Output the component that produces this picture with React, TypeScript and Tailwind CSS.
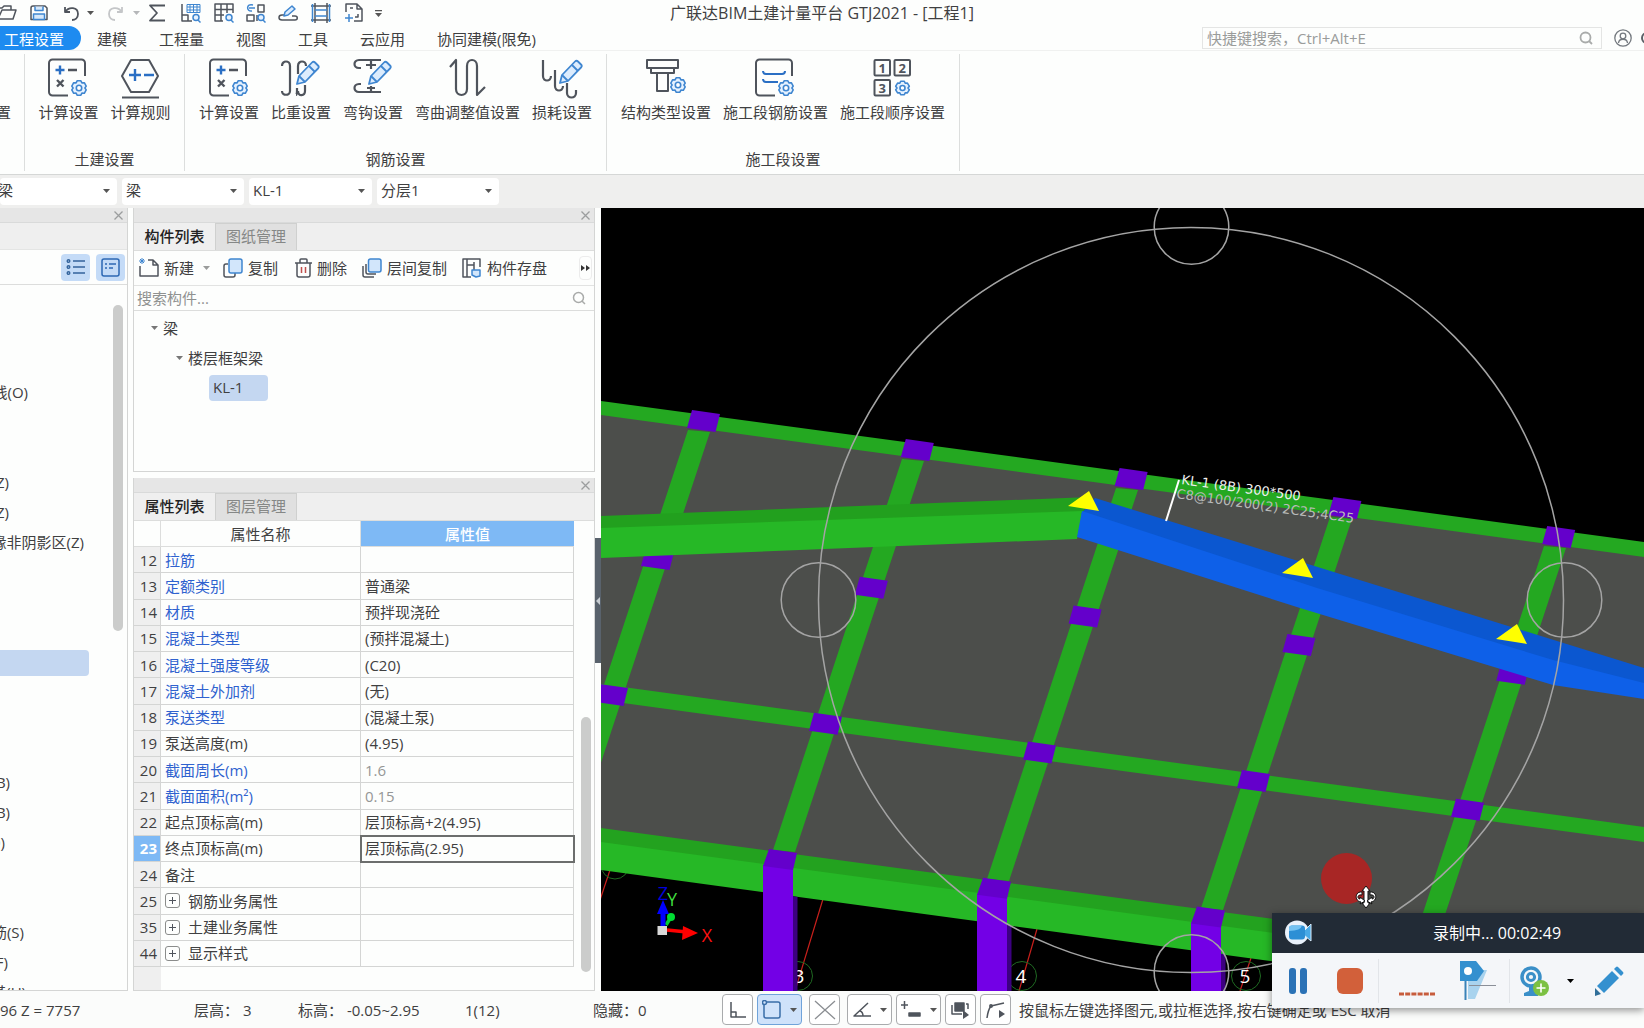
import React from "react";

type Kids = { children?: React.ReactNode };

const INK = "#4f545c";
const BLUE = "#3f86d0";

/* ---------- small drawing helpers ---------- */

function Ico({ w, h, box, sw = 1.5, stroke = INK, children }: Kids & { w: number; h: number; box?: string; sw?: number; stroke?: string }) {
  return (
    <svg width={w} height={h} viewBox={box ?? `0 0 ${w} ${h}`} fill="none" stroke={stroke} strokeWidth={sw} strokeLinejoin="round" className="shrink-0" aria-hidden="true">
      {children}
    </svg>
  );
}

function Caret({ color = "#555" }: { color?: string }) {
  return (
    <svg width="7" height="4" viewBox="0 0 7 4" className="shrink-0" aria-hidden="true">
      <path d="M0 0h7L3.500 4z" fill={color} />
    </svg>
  );
}

function Gear({ x, y, r = 7.5 }: { x: number; y: number; r?: number }) {
  const pts: string[] = [];
  for (let k = 0; k < 6; k++) {
    for (const [a, m] of [[-15, 1], [15, 1], [30, 0.78]]) {
      const t = ((k * 60 + a - 90) * Math.PI) / 180;
      pts.push(`${(x + Math.cos(t) * r * m).toFixed(1)},${(y + Math.sin(t) * r * m).toFixed(1)}`);
    }
  }
  return (
    <g stroke={BLUE} strokeWidth="1.600" fill="#e6f2ff">
      <polygon points={pts.join(" ")} />
      <circle cx={x} cy={y} r={r * 0.36} fill="#fff" />
    </g>
  );
}

function Pencil() {
  return (
    <g stroke={BLUE} strokeWidth="1.800" fill="#dcecfd">
      <path d="M16 26l2-8L31 4.500q1.500-1.500 3 0l3 3q1.500 1.500 0 3L24 24z" />
      <path d="M28 8l6 6M18 18l6 6" />
    </g>
  );
}

/* ---------- ribbon icons ---------- */

const CalcIcon = () => (
  <Ico w={40} h={40} sw={2}>
    <path d="M37 18V5a3.500 3.500 0 0 0-3.500-3.500h-29A3.500 3.500 0 0 0 1 5v29a3.500 3.500 0 0 0 3.500 3.500H20" />
    <path d="M7.500 12h9M12 7.500v9" stroke="#2a6fc4" strokeWidth="2.400" />
    <path d="M20 12h9M9 22l6.500 6.500M15.500 22L9 28.500" strokeWidth="2.400" />
    <Gear x={31} y={30} />
  </Ico>
);
const RuleIcon = () => (
  <Ico w={40} h={42} sw={2}>
    <path d="M1 18L10 2h18l9 16-9 16H10zM1 39.500h37" />
    <path d="M8 17h12M14 11v12M23 17h10" stroke="#2a6fc4" strokeWidth="2.400" />
  </Ico>
);
const WeightIcon = () => (
  <Ico w={40} h={40} sw={2.2}>
    <path d="M1 8c0-6 8-6 8 0v25c0 5-8 5-8 0M17 16V8c0-6 8-6 8 0M16 30v3c0 4-1 4-1 4M24 27v6c0 5-7 6-7 0" />
    <Pencil />
  </Ico>
);
const HookIcon = () => (
  <Ico w={40} h={40} sw={2.2}>
    <path d="M28 2H6c-6 0-6 8 0 8h2M28 34H6c-6 0-6-8 0-8h2M18 2v9M13 7h10M18 34v-6M14 30h8" />
    <Pencil />
  </Ico>
);
const BendIcon = () => (
  <Ico w={38} h={40} sw={2.2}>
    <path d="M1 9l6-7v29c0 8 11 8 11 0V8c0-8 10-8 10 0v29l8-8" />
  </Ico>
);
const LossIcon = () => (
  <Ico w={42} h={42} sw={2.2}>
    <path d="M2 2v16c0 6 8 6 8 0M14 12v16c0 6 8 6 8 0M26 25v10c0 6 9 6 9 0v-3" />
    <g transform="translate(3 -1)"><Pencil /></g>
  </Ico>
);
const StructIcon = () => (
  <Ico w={42} h={40} sw={2}>
    <path d="M2 2h31v8H2zM6 10h23v5H6zM12 15h11v18H12z" />
    <Gear x={33} y={27} />
  </Ico>
);
const SegBarIcon = () => (
  <Ico w={42} h={40} sw={2}>
    <path d="M38 18V5a3.500 3.500 0 0 0-3.500-3.500h-29A3.500 3.500 0 0 0 2 5v29a3.500 3.500 0 0 0 3.500 3.500H21" />
    <path d="M9 13c0 2 1 3 3 3h16c2 0 3-1 3-3M9 21c0 2 1 3 3 3h12" stroke="#2a6fc4" />
    <Gear x={32} y={30} />
  </Ico>
);
const SegOrderIcon = () => (
  <Ico w={40} h={40} sw={2}>
    <rect x="1.500" y="2" width="15.500" height="15.500" rx="1" />
    <rect x="21.500" y="2" width="15.500" height="15.500" rx="1" />
    <rect x="1.500" y="22" width="15.500" height="15.500" rx="1" />
    <g fill={INK} stroke="none" fontSize="13" fontWeight="700" textAnchor="middle" fontFamily="Open Sans, sans-serif">
      <text x="9.250" y="14.500">1</text>
      <text x="29.250" y="14.500">2</text>
      <text x="9.250" y="34.500">3</text>
    </g>
    <Gear x={29.5} y={30} r={7} />
  </Ico>
);

function Tool({ icon, label }: { icon: React.ReactNode; label: string }) {
  return (
    <button className="flex flex-col items-center">
      <span className="flex h-10 items-start justify-center">{icon}</span>
      <span className="mt-[3px] whitespace-nowrap leading-[22px]">{label}</span>
    </button>
  );
}

function Group({ title, width, children }: Kids & { title: string; width: string }) {
  return (
    <section className={`my-[3px] flex flex-col items-center justify-between border-r border-[#dcdedd] pt-1 ${width}`}>
      <div className="flex gap-3">{children}</div>
      <h2 className="leading-[24px]">{title}</h2>
    </section>
  );
}

/* ---------- title bar ---------- */

function QuickBtn({ label, w, children }: Kids & { label: string; w: string }) {
  return (
    <button aria-label={label} className={`flex h-6 shrink-0 items-center justify-center ${w}`}>
      {children}
    </button>
  );
}

function TitleBar() {
  return (
    <header className="flex h-[26px] items-center">
      <div className="flex flex-1 items-center">
        <QuickBtn label="打开" w="w-[17px]">
          <Ico w={17} h={16}><path d="M-4 14V3h6l2-2h7v4M-2 14l4-9h14l-3 9z" /></Ico>
        </QuickBtn>
        <QuickBtn label="保存" w="w-[44px]">
          <Ico w={18} h={16}><path d="M1 14.500V3a2 2 0 0 1 2-2h12l2 2v11.500z" /><path d="M5 1.500v4h8v-4M3.500 9h11v5.500h-11z" stroke={BLUE} fill="#d6e8fb" /></Ico>
        </QuickBtn>
        <QuickBtn label="撤销" w="w-[22px]">
          <Ico w={16} h={16}><path d="M1 2v5h5M1 7c4-6 13-5 13 2 0 4-3 6-6 6" strokeWidth="1.800" /></Ico>
        </QuickBtn>
        <QuickBtn label="撤销列表" w="w-[14px]"><Caret /></QuickBtn>
        <QuickBtn label="重做" w="w-[36px]">
          <Ico w={16} h={16} stroke="#c4c6c8"><path d="M15 2v5h-5M15 7C11 1 2 2 2 9c0 4 3 6 6 6" strokeWidth="1.800" /></Ico>
        </QuickBtn>
        <QuickBtn label="重做列表" w="w-[7px]"><Caret color="#b5b7b9" /></QuickBtn>
        <QuickBtn label="汇总" w="w-[34px]">
          <Ico w={18} h={18}><path d="M17 1.500H2L9 9l-7 7.500h15" strokeWidth="1.800" /></Ico>
        </QuickBtn>
        <QuickBtn label="查看工程量" w="w-[33px]">
          <Ico w={20} h={20}><path d="M1 1v17h10M1 12h6v6" /><path d="M6 1.500h13v8H6zM6 4h13M6 7h13M9 1.500v8M12.500 1.500v8M16 1.500v8" stroke={BLUE} strokeWidth="1" /><circle cx="15" cy="14.500" r="3" stroke={BLUE} fill="#e6f2ff" /><path d="M17 17l2.500 2.500" stroke={BLUE} /></Ico>
        </QuickBtn>
        <QuickBtn label="查看报表" w="w-[33px]">
          <Ico w={20} h={20}><path d="M9 18H1V1h18v9M1 6.500h18M1 12h9M7 1v17M13 1v9" /><circle cx="15" cy="14.500" r="3" stroke={BLUE} fill="#e6f2ff" /><path d="M17 17l2.500 2.500" stroke={BLUE} /></Ico>
        </QuickBtn>
        <QuickBtn label="查找图元" w="w-[32px]">
          <Ico w={20} h={20}><path d="M12 2h6v7h-6zM1 12h7v6H1zM11 12v6" /><path d="M7 2C0 0 0 9 6 8M3 5h6" stroke={BLUE} /><circle cx="15" cy="14.500" r="3" stroke={BLUE} fill="#e6f2ff" /><path d="M17 17l2.500 2.500" stroke={BLUE} /></Ico>
        </QuickBtn>
        <QuickBtn label="编辑" w="w-[32px]">
          <Ico w={20} h={18}><path d="M6 11H4c-4 0-4 5 0 5h13c3 0 3-4 0-4h-3" /><path d="M6 12l1-4 7-6 3 3-7 6z" stroke={BLUE} fill="#dcecfd" /></Ico>
        </QuickBtn>
        <QuickBtn label="楼层" w="w-[33px]">
          <Ico w={20} h={20}><path d="M4 0v20M16 0v20M0 3h20M0 17h20" /><path d="M1.500 1v18M18.500 1v18M4 7h12M4 13h12" stroke={BLUE} /></Ico>
        </QuickBtn>
        <QuickBtn label="全屏" w="w-[33px]">
          <Ico w={20} h={20}><path d="M2 9V1h11l5 5v12h-8M13 1v5h5M6 5h3M14 11v3h-3" /><path d="M5 11v8M1 15h8" stroke={BLUE} /></Ico>
        </QuickBtn>
        <QuickBtn label="自定义" w="w-[17px]">
          <Ico w={7} h={7} sw={0}><path d="M0 0h7v1.200H0zM0 3h7L3.500 7z" fill="#555" /></Ico>
        </QuickBtn>
      </div>
      <h1 className="text-base leading-[26px]">广联达BIM土建计量平台 GTJ2021 - [工程1]</h1>
      <div className="flex-1" />
    </header>
  );
}

function MenuBar() {
  return (
    <nav className="flex h-[25px] items-center border-b border-[#f0f1f0]">
      <button className="h-6 w-[81px] rounded-r-full bg-[#1e8bf0] pt-px pl-1 text-left text-white">工程设置</button>
      <div className="ml-4 flex flex-1 gap-8 pt-0.5">
        {["建模", "工程量", "视图", "工具", "云应用", "协同建模(限免)"].map((t) => (
          <button key={t} className="whitespace-nowrap">{t}</button>
        ))}
      </div>
      <label className="flex h-[22px] w-[400px] items-center border border-[#e4e5e4] pr-2 pl-1">
        <input aria-label="快捷键搜索" placeholder="快捷键搜索，Ctrl+Alt+E" className="min-w-0 flex-1 bg-transparent outline-none placeholder:text-[#9a9c9b]" />
        <Ico w={14} h={14} stroke="#a9abaa" sw={1.8}><circle cx="6.500" cy="6.500" r="5" /><path d="M10 10l3 3" /></Ico>
      </label>
      <div className="ml-3 flex w-[30px] items-center gap-[9px] overflow-hidden">
        <button aria-label="用户">
          <Ico w={18} h={18} stroke="#74797f" sw={1.3}><circle cx="9" cy="9" r="8.200" /><circle cx="9" cy="7" r="2.800" /><path d="M4.500 14c.5-5 8.500-5 9 0" /></Ico>
        </button>
        <Ico w={12} h={12} stroke="#5b5f66" sw={2}><circle cx="6" cy="6" r="5" /></Ico>
      </div>
    </nav>
  );
}

function Ribbon() {
  return (
    <div className="flex h-[123px] items-stretch">
      <div className="my-[3px] flex w-[25px] items-start border-r border-[#dcdedd] pt-[47px]">
        <div className="flex w-[11px] justify-end overflow-hidden leading-[22px]"><span>置</span></div>
      </div>
      <Group title="土建设置" width="w-[160px]">
        <Tool icon={<CalcIcon />} label="计算设置" />
        <Tool icon={<RuleIcon />} label="计算规则" />
      </Group>
      <Group title="钢筋设置" width="w-[422px]">
        <Tool icon={<CalcIcon />} label="计算设置" />
        <Tool icon={<WeightIcon />} label="比重设置" />
        <Tool icon={<HookIcon />} label="弯钩设置" />
        <Tool icon={<BendIcon />} label="弯曲调整值设置" />
        <Tool icon={<LossIcon />} label="损耗设置" />
      </Group>
      <Group title="施工段设置" width="w-[353px]">
        <Tool icon={<StructIcon />} label="结构类型设置" />
        <Tool icon={<SegBarIcon />} label="施工段钢筋设置" />
        <Tool icon={<SegOrderIcon />} label="施工段顺序设置" />
      </Group>
    </div>
  );
}

function Combo({ value, label, width, pad }: { value: string; label: string; width: string; pad: string }) {
  return (
    <label className={`relative flex h-[27px] items-center overflow-hidden rounded bg-white ${width}`}>
      <select aria-label={label} className={`h-full w-full appearance-none pb-[3px] outline-none ${pad}`}>
        <option>{value}</option>
      </select>
      <span className="pointer-events-none absolute right-[7px] bottom-3"><Caret /></span>
    </label>
  );
}

/* ---------- panels ---------- */

function PanelHead() {
  return (
    <div className="flex h-[15px] shrink-0 items-center justify-end border-b border-[#d9dada] bg-[#e6e6e6] pr-1">
      <button aria-label="关闭">
        <Ico w={9} h={9} stroke="#9b9d9e" sw={1.3}><path d="M.5.5l8 8M8.500.5l-8 8" /></Ico>
      </button>
    </div>
  );
}

function Tabs({ on, off }: { on: string; off: string }) {
  return (
    <div role="tablist" className="flex h-[28px] shrink-0 border-b border-[#dcdddc] bg-[#efefef]">
      <button role="tab" aria-selected="true" className="w-[81px] pb-px font-medium text-[#222]">{on}</button>
      <button role="tab" aria-selected="false" className="w-[82px] border border-b-0 border-[#cfd0cf] bg-[#e0e0e0] pb-0.5 text-[#858786]">{off}</button>
    </div>
  );
}

const LEFT_ROWS: { t: string; w: string; on?: boolean }[] = [
  { t: "", w: "w-0" }, { t: "", w: "w-0" }, { t: "", w: "w-0" },
  { t: "线(O)", w: "w-[28px]" },
  { t: "", w: "w-0" }, { t: "", w: "w-0" },
  { t: "(Z)", w: "w-[9px]" },
  { t: "(Z)", w: "w-[9px]" },
  { t: "缘非阴影区(Z)", w: "w-[84px]" },
  { t: "", w: "w-0" }, { t: "", w: "w-0" }, { t: "", w: "w-0" },
  { t: "", w: "w-[89px]", on: true },
  { t: "", w: "w-0" }, { t: "", w: "w-0" }, { t: "", w: "w-0" },
  { t: "(B)", w: "w-[10px]" },
  { t: "(B)", w: "w-[10px]" },
  { t: "(Q)", w: "w-[5px]" },
  { t: "", w: "w-0" }, { t: "", w: "w-0" },
  { t: "筋(S)", w: "w-[24px]" },
  { t: "(F)", w: "w-[8px]" },
  { t: "基(U)", w: "w-[26px]" },
];

function LeftPanel() {
  return (
    <aside className="flex min-h-0 w-[128px] shrink-0 flex-col border-r border-b border-[#d4d5d4]">
      <PanelHead />
      <div className="h-[27px] shrink-0 border-b border-[#e4e5e4] bg-[#efefef]" />
      <div className="flex h-[35px] shrink-0 items-center justify-end gap-[6px] border-b border-[#dcdddc] pr-[2px]">
        <button aria-label="列表" className="flex h-[27px] w-[29px] items-center justify-center rounded bg-[#c4dbf7]">
          <Ico w={20} h={18} stroke="#33639c" sw={1.4}><path d="M7 3h12M7 9h12M7 15h12" /><circle cx="2.500" cy="3" r="1.300" /><circle cx="2.500" cy="9" r="1.300" /><circle cx="2.500" cy="15" r="1.300" /></Ico>
        </button>
        <button aria-label="详情" className="flex h-[27px] w-[29px] items-center justify-center rounded bg-[#c4dbf7]">
          <Ico w={19} h={19} stroke="#2c68b4"><rect x="1" y="1" width="17" height="17" rx="2" /><path d="M4 6h2M8 6h7M4 10h2M8 10h4" /></Ico>
        </button>
      </div>
      <div className="flex min-h-0 flex-1">
        <ul className="min-w-0 flex-1 overflow-hidden pt-[3px]">
          {LEFT_ROWS.map((r, i) => (
            <li key={i} className="flex h-[30px] items-center">
              <span className={`flex h-[26px] items-center justify-end overflow-hidden pb-0.5 whitespace-nowrap ${r.w} ${r.on ? "rounded-r bg-[#c4d7f1]" : ""}`}>{r.t}</span>
            </li>
          ))}
        </ul>
        <div className="mt-5 mr-1 h-[326px] w-[10px] rounded-full bg-[#cbcccb]" />
      </div>
    </aside>
  );
}

function CompTool({ label, gap, children }: Kids & { label: string; gap: string }) {
  return (
    <button className={`flex items-center gap-[5px] whitespace-nowrap ${gap}`}>
      {children}
      {label}
    </button>
  );
}

function ComponentPanel() {
  return (
    <section className="flex h-[264px] shrink-0 flex-col border border-t-0 border-[#d4d5d4]">
      <PanelHead />
      <Tabs on="构件列表" off="图纸管理" />
      <div className="flex h-[35px] shrink-0 items-center border-b border-[#e2e3e2] pl-[5px]">
        <CompTool label="新建" gap="mr-[9px]">
          <Ico w={20} h={20}><path d="M9 2h5l5 5v11H1V8M14 2v5h5" /><path d="M3 0v6M0 3h6M1 1l4 4M5 1L1 5" stroke={BLUE} strokeWidth="1" /></Ico>
        </CompTool>
        <Caret color="#9a9c9b" />
        <CompTool label="复制" gap="ml-[13px]">
          <Ico w={20} h={20}><path d="M5 6H3a2 2 0 0 0-2 2v9a2 2 0 0 0 2 2h7a2 2 0 0 0 2-2v-2" /><rect x="6" y="1" width="13" height="14" rx="2" stroke={BLUE} fill="#d2e6fb" /></Ico>
        </CompTool>
        <CompTool label="删除" gap="ml-[17px]">
          <Ico w={17} h={20}><path d="M0 5h17M2 5v12a2 2 0 0 0 2 2h9a2 2 0 0 0 2-2V5M5 5V2a1 1 0 0 1 1-1h5a1 1 0 0 1 1 1v3" /><path d="M6.500 9v6M10.500 9v6" stroke="#c0504d" /></Ico>
        </CompTool>
        <CompTool label="层间复制" gap="ml-[15px]">
          <Ico w={20} h={20}><path d="M1 8v9a2 2 0 0 0 2 2h9M4 6v8a2 2 0 0 0 2 2h8" /><rect x="6.500" y="1" width="12.500" height="13" rx="2" stroke={BLUE} fill="#d2e6fb" /></Ico>
        </CompTool>
        <CompTool label="构件存盘" gap="ml-[15px]">
          <Ico w={20} h={20}><path d="M9 19H1V1h17v8M5 1v18M5 7h7M12 4v8" /><path d="M10 12h8v6l-4 1-4-2z" stroke={BLUE} fill="#d2e6fb" /></Ico>
        </CompTool>
        <button aria-label="更多" className="mr-0.5 ml-auto flex h-6 w-[13px] items-center justify-center rounded-sm border border-[#ececec]">
          <Ico w={9} h={6} sw={0}><path d="M0 0l4 3-4 3zM5 0l4 3-4 3z" fill="#333" /></Ico>
        </button>
      </div>
      <label className="flex h-[25px] shrink-0 items-center border-b border-[#dcdddc] pr-2 pl-[3px]">
        <input aria-label="搜索构件" placeholder="搜索构件..." className="min-w-0 flex-1 bg-transparent pb-px outline-none placeholder:text-[#8f9190]" />
        <Ico w={14} h={14} stroke="#a9abaa" sw={1.5}><circle cx="6.500" cy="6.500" r="5" /><path d="M10 10l3 3" /></Ico>
      </label>
      <ul className="flex-1 pt-0.5">
        <li className="flex h-[30px] items-center gap-[5px] pl-[17px]"><Caret color="#777" />梁</li>
        <li className="flex h-[30px] items-center gap-[5px] pl-[42px]"><Caret color="#777" />楼层框架梁</li>
        <li className="flex h-[30px] items-center pl-[75px]"><span className="h-[26px] w-[59px] rounded bg-[#c4d7f1] pl-1 leading-[25px]">KL-1</span></li>
      </ul>
    </section>
  );
}

type Row = { n: number; name: string; value: string; tone?: "blue" | "black"; dim?: boolean; on?: boolean; group?: boolean };
const ROWS: Row[] = [
  { n: 12, name: "拉筋", value: "", tone: "blue" },
  { n: 13, name: "定额类别", value: "普通梁", tone: "blue" },
  { n: 14, name: "材质", value: "预拌现浇砼", tone: "blue" },
  { n: 15, name: "混凝土类型", value: "(预拌混凝土)", tone: "blue" },
  { n: 16, name: "混凝土强度等级", value: "(C20)", tone: "blue" },
  { n: 17, name: "混凝土外加剂", value: "(无)", tone: "blue" },
  { n: 18, name: "泵送类型", value: "(混凝土泵)", tone: "blue" },
  { n: 19, name: "泵送高度(m)", value: "(4.95)" },
  { n: 20, name: "截面周长(m)", value: "1.6", tone: "blue", dim: true },
  { n: 21, name: "截面面积(m²)", value: "0.15", tone: "blue", dim: true },
  { n: 22, name: "起点顶标高(m)", value: "层顶标高+2(4.95)" },
  { n: 23, name: "终点顶标高(m)", value: "层顶标高(2.95)", on: true },
  { n: 24, name: "备注", value: "" },
  { n: 25, name: "钢筋业务属性", value: "", group: true },
  { n: 35, name: "土建业务属性", value: "", group: true },
  { n: 44, name: "显示样式", value: "", group: true },
];

function PropertyPanel() {
  return (
    <section className="mt-[6px] flex min-h-0 flex-1 flex-col border border-t-0 border-[#d4d5d4]">
      <PanelHead />
      <Tabs on="属性列表" off="图层管理" />
      <div className="flex min-h-0 flex-1">
        <div className="flex w-[440px] flex-col">
          <table className="h-[446px] w-full table-fixed border-separate border-spacing-0">
            <thead>
              <tr className="h-[26px]">
                <th className="w-[27px] border-r border-b border-[#dcdddc] p-0" />
                <th className="w-[200px] border-r border-b border-[#dcdddc] p-0 font-normal">属性名称</th>
                <th className="border-b border-[#dcdddc] bg-[#7eb9f5] p-0 font-medium text-white">属性值</th>
              </tr>
            </thead>
            <tbody>
              {ROWS.map((r) => (
                <tr key={r.n} className="h-[26px]">
                  <td className={`border-r border-b border-[#d4d5d4] p-0 pr-[3px] text-right ${r.on ? "bg-[#7eb9f5] font-bold text-white" : "bg-[#efefef]"}`}>{r.n}</td>
                  <td className={`border-r border-b border-[#d4d5d4] p-0 pl-1 ${r.tone === "blue" ? "text-[#2f62cf]" : ""}`}>
                    <span className="flex items-center">
                      {r.group && (
                        <button aria-label="展开" className="mr-2 flex h-[15px] w-[15px] items-center justify-center rounded-[3px] border border-[#8a8c8b]">
                          <Ico w={7} h={7} sw={1}><path d="M0 3.500h7M3.500 0v7" /></Ico>
                        </button>
                      )}
                      {r.name}
                    </span>
                  </td>
                  <td className={`border-r border-b border-[#d4d5d4] p-0 pl-1 ${r.on ? "outline-2 -outline-offset-1 outline-[#6c6e6d]" : ""} ${r.dim ? "text-[#959796]" : ""}`}>{r.value}</td>
                </tr>
              ))}
            </tbody>
          </table>
          <div className="w-[27px] flex-1 bg-[#efefef]" />
        </div>
        <div className="mb-[18px] ml-[7px] h-[255px] w-[10px] self-end rounded-full bg-[#cbcccb]" />
      </div>
    </section>
  );
}

/* ---------- 3D model view ---------- */

const STEP = [0, 1, 2, 3, 4, 5];
const quad = (x: number, y: number) => `${x},${y} ${x + 28},${y + 4} ${x + 23.5},${y + 22} ${x - 5},${y + 18}`;

function ModelView() {
  return (
    <svg viewBox="601 208 1043 783" preserveAspectRatio="xMinYMin slice" className="h-full w-full bg-black" role="img" aria-label="三维模型">
      <polygon points="601,408 1644,549 1644,975 601,835" fill="#4c4e4b" />
      <polygon points="601,401 1644,542 1644,557 601,415" fill="#24a821" />
      <polygon points="601,684 1644,827 1644,842 601,700" fill="#24a821" />
      {STEP.map((k) => {
        const dx = (k - 1) * 214;
        const dy = (k - 1) * 29;
        return <polygon key={k} points={`${902 + dx},${459 + dy} ${924 + dx},${461 + dy} ${795 + dx},${852 + dy} ${773 + dx},${850 + dy}`} fill="#24a821" />;
      })}
      <g fill="#6400cb">
        {STEP.map((k) => (
          <g key={k}>
            <polygon points={quad(692 + k * 213.8, 410 + k * 29)} />
            <polygon points={quad(646 + k * 213.8, 548 + k * 28.7)} />
            <polygon points={quad(600 + k * 214, 684 + k * 28.7)} />
          </g>
        ))}
      </g>

      {/* sloped beam and the selected beam */}
      <polygon points="601,516 1090,497 1082,515 601,532" fill="#22a01e" />
      <polygon points="601,528 1083,511 1077,539 601,558" fill="#26b826" />
      <polygon points="1095,498 1644,668 1644,686 1553,666 1317,592 1081,514" fill="#0b57d0" />
      <polygon points="1082,511 1317,588 1553,660 1644,683 1644,699 1553,685 1300,608 1077,537" fill="#0e60e8" />
      <path d="M1089 491l10 20-31-5zM1303 558l10 20-31-5zM1517 624l10 20-31-5z" fill="#ffff00" />

      {/* axis grid below the model */}
      <path d="M823 899l-28 92M1037 929l-18 62M1251 958l-11 33M610 870l-10 30" stroke="#c8201c" strokeWidth="1.200" />
      <g stroke="#1f6a22" fill="none">
        <circle cx="798" cy="976" r="14.500" />
        <circle cx="1022" cy="976" r="14.500" />
        <circle cx="1246" cy="976" r="14.500" />
        <circle cx="615" cy="865" r="14" />
      </g>
      <g fill="#fff" fontSize="19" textAnchor="middle" fontFamily="Open Sans, sans-serif">
        <text x="799" y="983">3</text>
        <text x="1021" y="983">4</text>
        <text x="1245" y="983">5</text>
      </g>

      <polygon points="601,828 1644,969 1644,986 601,845" fill="#23a21f" />
      <polygon points="601,842 1644,983 1644,1012 601,870" fill="#26b826" />
      {[0, 1, 2].map((k) => {
        const x = 763 + k * 214;
        const y = 849 + k * 28.7;
        return (
          <g key={k}>
            <polygon points={`${x + 29},${y + 47} ${x + 34.5},${y + 48} ${x + 34.5},991 ${x + 29},991`} fill="#3c0080" />
            <polygon points={`${x},${y + 16} ${x + 30},${y + 18} ${x + 30},991 ${x},991`} fill="#7300e6" />
            <polygon points={`${x + 6},${y} ${x + 34},${y + 4} ${x + 30},${y + 21} ${x},${y + 17}`} fill="#6400cb" />
          </g>
        );
      })}

      <g stroke="#a4a4a4" strokeWidth="1.500" fill="none">
        <circle cx="1191" cy="600" r="372.500" />
        <circle cx="818.500" cy="600" r="37.300" />
        <circle cx="1564.500" cy="600" r="37.300" />
        <circle cx="1191.500" cy="227" r="37.300" />
        <circle cx="1191.500" cy="972" r="37.300" />
      </g>

      <path d="M1179 480l-13 41" stroke="#fff" strokeWidth="2" />
      <g fontSize="13" fontFamily="DejaVu Sans, sans-serif">
        <text transform="translate(1181 484) rotate(8)" fill="#f0f0f0">KL-1 (8B) 300*500</text>
        <text transform="translate(1176 498) rotate(8)" fill="#b9bbb9">C8@100/200(2) 2C25;4C25</text>
      </g>

      {/* view axes */}
      <g strokeWidth="3.500">
        <path d="M667 930l20 2" stroke="#f00" />
        <path d="M683 926l15 7-16 7z" fill="#f00" />
        <path d="M666 925l5-8" stroke="#0c3" />
        <circle cx="671" cy="917" r="4" fill="#0d3" />
        <path d="M663 926v-15" stroke="#00f" strokeWidth="5" />
        <path d="M657 914l6-14 6 14z" fill="#00f" />
        <path d="M657.500 926h9.500v9h-9.500z" fill="#d8d8d8" />
      </g>
      <g fontSize="18" textAnchor="middle" fontFamily="Open Sans, sans-serif">
        <text x="663" y="900" fill="#00d">Z</text>
        <text x="672" y="906" fill="#3fdc3f">Y</text>
        <text x="707" y="942" fill="#f11">X</text>
      </g>

      <circle cx="1346.500" cy="878.500" r="25.500" fill="#a82625" />
      <g stroke="#111" strokeWidth="1" fill="#fff">
        <path d="M1366 886l4 5h-2v12h2l-4 5-4-5h2v-12h-2z" />
        <path d="M1362 892c-7-1-8 9-1 10l-1 2 5-3-5-4v2c-3 0-3-5 2-4zM1370 892c7-1 8 9 1 10l1 2-5-3 5-4v2c3 0 3-5-2-4z" />
      </g>
    </svg>
  );
}

/* ---------- status bar ---------- */

function StatusBtn({ label, w, on, menu, children }: Kids & { label: string; w: string; on?: boolean; menu?: boolean }) {
  return (
    <button aria-label={label} className={`flex h-[31px] items-center justify-center gap-2 rounded border ${w} ${on ? "border-[#6fa3da] bg-[#cfe2fa]" : "border-[#a9abad] bg-white"}`}>
      {children}
      {menu && <Caret />}
    </button>
  );
}

function StatusBar() {
  return (
    <footer className="flex h-[37px] shrink-0 items-center overflow-hidden whitespace-nowrap bg-[#fbfcfb]">
      <span className="w-[194px]">96 Z = 7757</span>
      <span className="w-[104px]">层高：&nbsp;3</span>
      <span className="w-[167px]">标高：&nbsp;-0.05~2.95</span>
      <span className="w-[128px]">1(12)</span>
      <span className="w-[129px]">隐藏：0</span>
      <div className="flex items-center gap-1">
        <StatusBtn label="正交" w="w-[31px]"><Ico w={18} h={18}><path d="M2 1v15h15M2 11h5v5" /></Ico></StatusBtn>
        <StatusBtn label="选择" w="w-[45px]" on menu><Ico w={20} h={20} stroke="#3a6ea8"><path d="M5 2h11a2 2 0 0 1 2 2v12a2 2 0 0 1-2 2H4a2 2 0 0 1-2-2V5" /><circle cx="2.500" cy="2.500" r="2" /></Ico></StatusBtn>
        <StatusBtn label="交点" w="mx-[3px] w-[31px]"><Ico w={22} h={20} stroke="#8b8e92" sw={1.3}><path d="M1 1l20 18M21 1L1 19" /></Ico></StatusBtn>
        <StatusBtn label="角度" w="w-[45px]" menu><Ico w={20} h={18}><path d="M16 2L2 15h17M8 10q3 1 3 5" /></Ico></StatusBtn>
        <StatusBtn label="偏移" w="w-[45px]" menu><Ico w={22} h={18}><path d="M1 4h7M4.500 0v8" /><path d="M9 12h11v3H9z" fill={INK} /></Ico></StatusBtn>
        <StatusBtn label="显示" w="w-[31px]"><Ico w={20} h={18}><path d="M4 2h9v8H4z" fill={INK} /><path d="M1 4v9h10M15 3h2v5" /><path d="M12 9l6 5-6 4z" fill={INK} strokeWidth="0" /></Ico></StatusBtn>
        <StatusBtn label="折线" w="w-[31px]"><Ico w={20} h={18}><path d="M1 17q1-8 4-12l13-3" /><circle cx="5" cy="5" r="1.200" /><path d="M13 9l6 4-6 4z" fill={INK} strokeWidth="0" /></Ico></StatusBtn>
      </div>
      <span className="ml-2">按鼠标左键选择图元,或拉框选择,按右键确定或 ESC 取消</span>
    </footer>
  );
}

/* ---------- screen recorder window ---------- */

function Recorder() {
  return (
    <div className="absolute right-0 bottom-5 w-[372px] shadow-[0_2px_8px_rgba(0,0,0,0.45)]">
      <div className="flex h-10 items-center bg-[#222b36] pl-3 text-white">
        <svg width="30" height="28" viewBox="0 0 30 28" aria-hidden="true">
          <circle cx="13" cy="13.500" r="12" fill="#e9f1fb" />
          <path d="M20 12l7-7v17l-7-6z" fill="#49a9e6" stroke="#d9ecfb" />
          <rect x="5" y="6.500" width="16" height="14" rx="3" fill="#2d8fd5" />
          <path d="M5 12V9.500a3 3 0 0 1 3-3h10q-1 5-13 5.500z" fill="#74c2f2" />
        </svg>
        <span className="ml-[119px] text-base">录制中... 00:02:49</span>
      </div>
      <div className="flex h-[55px] items-center bg-[#f4f6f9]">
        <button aria-label="暂停" className="ml-4 flex w-[20px] justify-center gap-1">
          <span className="h-[26px] w-[7px] rounded-[3px] bg-[#2b72b6]" />
          <span className="h-[26px] w-[7px] rounded-[3px] bg-[#2b72b6]" />
        </button>
        <button aria-label="停止" className="ml-[29px] h-[26px] w-[26px] rounded-md bg-[#d2603a]" />
        <div className="ml-[15px] h-11 border-l border-[#e2e5e9]" />
        <svg width="36" height="40" viewBox="0 0 36 40" className="ml-5" aria-hidden="true">
          <path d="M0 33h36" stroke="#c75c3d" strokeWidth="3" strokeDasharray="5 1.200" />
        </svg>
        <svg width="38" height="40" viewBox="0 0 38 40" className="ml-6" aria-hidden="true">
          <path d="M22 9h6L16 38H9V20h8z" fill="#a9d3ee" />
          <path d="M1 0h16l8 10-7 10H1z" fill="#3490cf" />
          <circle cx="9" cy="10" r="4" fill="#fff" />
          <path d="M6.500 20v19" stroke="#3a83b8" strokeWidth="2" />
          <path d="M10 24.500h27" stroke="#8a8f98" />
        </svg>
        <div className="ml-3 h-11 border-l border-[#e2e5e9]" />
        <button aria-label="摄像头" className="ml-[9px]">
          <svg width="32" height="32" viewBox="0 0 32 32" aria-hidden="true">
            <circle cx="12" cy="12" r="9" fill="none" stroke="#3a8fc8" strokeWidth="3.500" />
            <circle cx="12" cy="12" r="3.600" fill="none" stroke="#3a8fc8" strokeWidth="3" />
            <path d="M10 22h5v5h4v4H5v-3l5-2z" fill="#3a8fc8" />
            <circle cx="22" cy="23" r="8" fill="#7cc142" />
            <path d="M17.500 23h9M22 18.500v9" stroke="#fff" strokeWidth="1.600" />
          </svg>
        </button>
        <span className="ml-4"><Caret color="#000" /></span>
        <button aria-label="画笔" className="ml-5">
          <svg width="30" height="30" viewBox="0 0 30 30" fill="#3490cf" aria-hidden="true">
            <path d="M18 5l7 7L10 27l-7-7z" />
            <path d="M20 3l2-2q1-1 2 0l5 5q1 1 0 2l-2 2z" />
            <path d="M1 22l6 6-6 2z" fill="#2f6e99" />
          </svg>
        </button>
      </div>
    </div>
  );
}

export default function App() {
  return (
    <div className="relative flex h-screen w-full flex-col overflow-hidden bg-[#fdfefd] font-['Open_Sans','Noto_Sans_CJK_SC',sans-serif] text-[15px] leading-5 text-[#3f4041]">
      <TitleBar />
      <MenuBar />
      <Ribbon />
      <div className="flex h-[34px] shrink-0 items-center gap-[5px] border-t border-[#d5d7d6] bg-[#efefee]">
        <Combo label="类别" value="梁" width="w-[117px]" pad="-ml-[2px]" />
        <Combo label="构件类型" value="梁" width="w-[122px]" pad="pl-1" />
        <Combo label="构件" value="KL-1" width="w-[123px]" pad="pl-1" />
        <Combo label="分层" value="分层1" width="w-[122px]" pad="pl-1" />
      </div>
      <main className="flex min-h-0 flex-1">
        <LeftPanel />
        <div className="ml-[5px] flex w-[462px] shrink-0 flex-col">
          <ComponentPanel />
          <PropertyPanel />
        </div>
        <div className="flex w-[6px] shrink-0 flex-col pt-[330px]">
          <button aria-label="收起" className="flex h-[125px] w-full items-center justify-center bg-[#59626c]">
            <svg width="4" height="8" viewBox="0 0 4 8" aria-hidden="true"><path d="M4 0v8L0 4z" fill="#c8cdd2" /></svg>
          </button>
        </div>
        <div className="min-w-0 flex-1"><ModelView /></div>
      </main>
      <StatusBar />
      <Recorder />
    </div>
  );
}
